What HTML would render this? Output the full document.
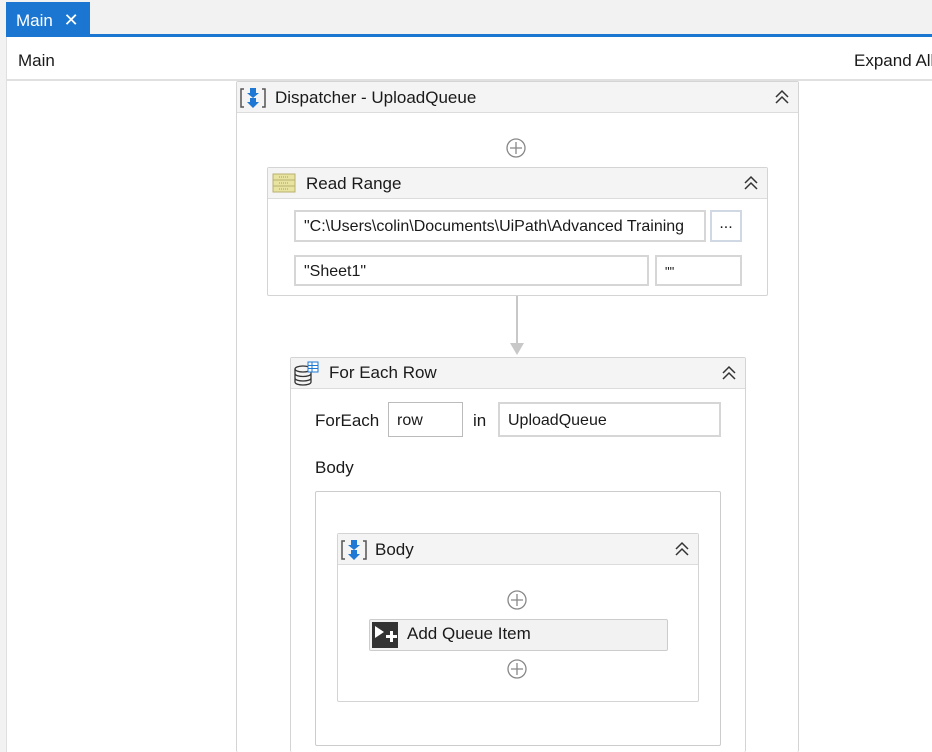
<!DOCTYPE html><html><head><style>
*{box-sizing:border-box;margin:0;padding:0}
html{width:932px;height:752px;overflow:hidden}
body{width:932px;height:752px;overflow:hidden;background:#f2f2f2;font-family:"Segoe UI","Liberation Sans",sans-serif;font-size:16px;color:#1a1a1a;position:relative}
.a{position:absolute}
.box{position:absolute;border:1px solid #d4d4d4;background:#fff;border-radius:2px}
.hdr{position:absolute;left:0;right:0;top:0;background:#f4f4f4;border-bottom:1px solid #dcdcdc}
.inp{position:absolute;border:2px solid #d6d6d6;background:#fff;font-size:16px;padding-left:8px;line-height:30px;white-space:nowrap;overflow:hidden}
.chev{position:absolute;right:8px;top:6px}
</style></head><body>
<div class="a" style="left:6px;top:2px;width:84px;height:34px;background:#1b76d2;color:#fff;font-size:17px;line-height:36px;padding-left:10px">Main <span style="margin-left:6px;font-size:18px">✕</span></div>
<div class="a" style="left:6px;top:34px;width:926px;height:3px;background:#1b76d2"></div>
<div class="a" style="left:6px;top:37px;width:926px;height:715px;background:#fff;border-left:1px solid #e0e0e0"></div>
<div class="a" style="left:18px;top:51px;font-size:17px">Main</div>
<div class="a" style="left:854px;top:51px;font-size:17px;white-space:nowrap">Expand All</div>
<div class="a" style="left:7px;top:79px;width:925px;height:2px;background:#e0e0e0"></div>

<div class="box" style="left:236px;top:81px;width:563px;height:671px;border-bottom:none">
 <div class="hdr" style="height:31px"></div>
 <svg class="a" style="left:2px;top:4px" width="28" height="24"><path d="M5 3H2v18h3M23 3h3v18h-3" stroke="#555" fill="none" stroke-width="1.5"/><path d="M11 2h6v5h3l-6 5-6-5h3z M11 12h6v4h3l-6 6-6-6h3z" fill="#1e78d4"/></svg>
 <div class="a" style="left:38px;top:6px;font-size:17px">Dispatcher - UploadQueue</div>
 <svg class="chev" width="16" height="16"><path d="M2 9l6-6 6 6M2 15l6-6 6 6" stroke="#333" fill="none" stroke-width="1.5"/></svg>
</div>

<div class="box" style="left:267px;top:167px;width:501px;height:129px">
 <div class="hdr" style="height:31px"></div>
 <svg class="a" style="left:3px;top:4px" width="26" height="24"><rect x="2" y="2" width="22" height="18" fill="#e9e3a0" stroke="#b8b070"/><path d="M2 8h22M2 14h22" stroke="#b8b070"/><path d="M8 5h10M8 11h10M8 17h10" stroke="#999" stroke-dasharray="1 1"/></svg>
 <div class="a" style="left:38px;top:6px;font-size:17px">Read Range</div>
 <svg class="chev" width="16" height="16"><path d="M2 9l6-6 6 6M2 15l6-6 6 6" stroke="#333" fill="none" stroke-width="1.5"/></svg>
</div>
<div class="inp" style="left:294px;top:210px;width:412px;height:32px">"C:\Users\colin\Documents\UiPath\Advanced Training</div>
<div class="inp" style="left:710px;top:210px;width:32px;height:32px;padding:0;text-align:center;border-color:#d0d8e4;line-height:24px">...</div>
<div class="inp" style="left:294px;top:255px;width:355px;height:31px">"Sheet1"</div>
<div class="inp" style="left:655px;top:255px;width:87px;height:31px;font-size:13px">""</div>

<div class="box" style="left:290px;top:357px;width:456px;height:395px;border-bottom:none">
 <div class="hdr" style="height:31px"></div>
 <svg class="a" style="left:2px;top:2px" width="28" height="28"><ellipse cx="10" cy="9" rx="8" ry="3" fill="none" stroke="#333" stroke-width="1.3"/><path d="M2 9v13c0 4 16 4 16 0V9M2 13.5c0 4 16 4 16 0M2 18c0 4 16 4 16 0" fill="none" stroke="#333" stroke-width="1.3"/><rect x="15" y="2" width="10" height="10" fill="#fff" stroke="#1e78d4"/><path d="M15 5.5h10M15 8.5h10M19 2v10" stroke="#1e78d4"/></svg>
 <div class="a" style="left:38px;top:5px;font-size:17px">For Each Row</div>
 <svg class="chev" width="16" height="16"><path d="M2 9l6-6 6 6M2 15l6-6 6 6" stroke="#333" fill="none" stroke-width="1.5"/></svg>
</div>
<div class="a" style="left:315px;top:411px;font-size:17px">ForEach</div>
<div class="inp" style="left:388px;top:402px;width:75px;height:35px;line-height:35px;border-width:1px;border-color:#bbb">row</div>
<div class="a" style="left:473px;top:411px;font-size:17px">in</div>
<div class="inp" style="left:498px;top:402px;width:223px;height:35px;line-height:33px">UploadQueue</div>
<div class="a" style="left:315px;top:458px;font-size:17px">Body</div>
<div class="box" style="left:315px;top:491px;width:406px;height:255px;border-color:#ccc"></div>

<div class="box" style="left:337px;top:533px;width:362px;height:169px">
 <div class="hdr" style="height:31px"></div>
 <svg class="a" style="left:2px;top:4px" width="28" height="24"><path d="M5 3H2v18h3M23 3h3v18h-3" stroke="#555" fill="none" stroke-width="1.5"/><path d="M11 2h6v5h3l-6 5-6-5h3z M11 12h6v4h3l-6 6-6-6h3z" fill="#1e78d4"/></svg>
 <div class="a" style="left:37px;top:6px;font-size:17px">Body</div>
 <svg class="chev" width="16" height="16"><path d="M2 9l6-6 6 6M2 15l6-6 6 6" stroke="#333" fill="none" stroke-width="1.5"/></svg>
</div>
<div class="a" style="left:369px;top:619px;width:299px;height:32px;background:#f2f2f2;border:1px solid #ccc;border-radius:2px"></div>
<svg class="a" style="left:372px;top:622px" width="26" height="26"><rect width="26" height="26" fill="#333"/><path d="M3 4l9 6-9 6z" fill="#fff"/><path d="M14 13h4v-4h3v4h4v3h-4v4h-3v-4h-4z" fill="#fff"/></svg>
<div class="a" style="left:407px;top:624px;font-size:17px">Add Queue Item</div>

<svg class="a" style="left:0;top:0" width="932" height="752">
<g fill="none" stroke="#888" stroke-width="1.3"><circle cx="516" cy="148" r="9"/><path d="M510 148h12M516 142v12"/>
<circle cx="517" cy="600" r="9"/><path d="M511 600h12M517 594v12"/>
<circle cx="517" cy="669" r="9"/><path d="M511 669h12M517 663v12"/></g>
<path d="M517 296v50" stroke="#c8c8c8" stroke-width="2"/><path d="M510 343l7 12 7-12z" fill="#c8c8c8"/>
</svg>
</body></html>
